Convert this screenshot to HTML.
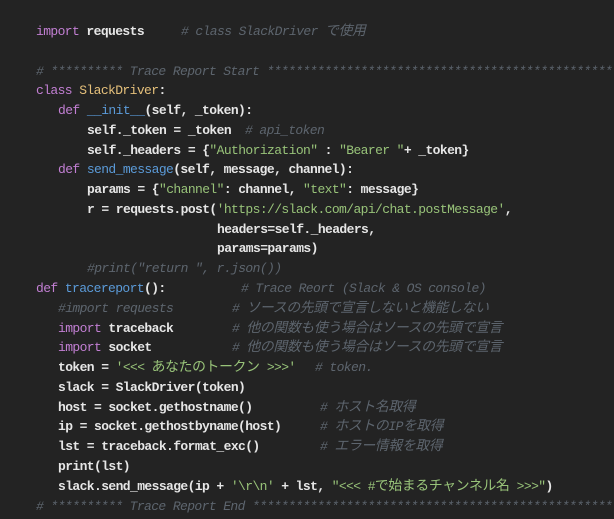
<!DOCTYPE html>
<html><head><meta charset="utf-8"><style>
html,body{margin:0;padding:0;background:#232323;width:614px;height:517px;overflow:hidden}
#w{position:absolute;left:0;top:2px;width:614px;height:517px}
.l{position:absolute;height:20px;line-height:20px;white-space:pre;font-family:"Liberation Mono","Noto Sans CJK JP",monospace;font-size:13px;letter-spacing:-0.6px;color:#e6e6e6;font-weight:bold}
.k{color:#c27fd3;font-weight:normal}
.c{color:#5d656e;font-style:italic;font-weight:normal}
.f{color:#5b9bd9;font-weight:normal}
.y{color:#e5c07b;font-weight:normal}
.s{color:#98c379;font-weight:normal}
.j{font-size:13.8px;letter-spacing:-0.3px;font-weight:normal}
</style></head><body><div id="w">
<div class="l" style="left:36px;top:20px"><span class="k">import</span> requests</div>
<div class="l c" style="left:181px;top:20px"># class SlackDriver <span class="j">で使用</span></div>
<div class="l c" style="left:36px;top:60px"># ********** Trace Report Start ***************************************************</div>
<div class="l" style="left:36px;top:79px"><span class="k">class</span> <span class="y">SlackDriver</span>:</div>
<div class="l" style="left:58px;top:99px"><span class="k">def</span> <span class="f">__init__</span>(self, _token):</div>
<div class="l" style="left:87px;top:119px">self._token = _token</div>
<div class="l c" style="left:245px;top:119px"># api_token</div>
<div class="l" style="left:87px;top:139px">self._headers = {<span class="s">"Authorization"</span> : <span class="s">"Bearer "</span>+ _token}</div>
<div class="l" style="left:58px;top:158px"><span class="k">def</span> <span class="f">send_message</span>(self, message, channel):</div>
<div class="l" style="left:87px;top:178px">params = {<span class="s">"channel"</span>: channel, <span class="s">"text"</span>: message}</div>
<div class="l" style="left:87px;top:198px">r = requests.post(<span class="s">'https://slack.com/api/chat.postMessage'</span>,</div>
<div class="l" style="left:217px;top:218px">headers=self._headers,</div>
<div class="l" style="left:217px;top:237px">params=params)</div>
<div class="l c" style="left:87px;top:257px">#print("return ", r.json())</div>
<div class="l" style="left:36px;top:277px"><span class="k">def</span> <span class="f">tracereport</span>():</div>
<div class="l c" style="left:241px;top:277px"># Trace Reort (Slack &amp; OS console)</div>
<div class="l c" style="left:58px;top:297px">#import requests</div>
<div class="l c" style="left:232px;top:297px"># <span class="j">ソースの先頭で宣言しないと機能しない</span></div>
<div class="l" style="left:58px;top:317px"><span class="k">import</span> traceback</div>
<div class="l c" style="left:232px;top:317px"># <span class="j">他の関数も使う場合はソースの先頭で宣言</span></div>
<div class="l" style="left:58px;top:336px"><span class="k">import</span> socket</div>
<div class="l c" style="left:232px;top:336px"># <span class="j">他の関数も使う場合はソースの先頭で宣言</span></div>
<div class="l" style="left:58px;top:356px">token = <span class="s">'&lt;&lt;&lt; <span class="j">あなたのトークン</span> &gt;&gt;&gt;'</span></div>
<div class="l c" style="left:315px;top:356px"># token.</div>
<div class="l" style="left:58px;top:376px">slack = SlackDriver(token)</div>
<div class="l" style="left:58px;top:396px">host = socket.gethostname()</div>
<div class="l c" style="left:320px;top:396px"># <span class="j">ホスト名取得</span></div>
<div class="l" style="left:58px;top:415px">ip = socket.gethostbyname(host)</div>
<div class="l c" style="left:320px;top:415px"># <span class="j">ホストの</span>IP<span class="j">を取得</span></div>
<div class="l" style="left:58px;top:435px">lst = traceback.format_exc()</div>
<div class="l c" style="left:320px;top:435px"># <span class="j">エラー情報を取得</span></div>
<div class="l" style="left:58px;top:455px">print(lst)</div>
<div class="l" style="left:58px;top:475px">slack.send_message(ip + <span class="s">'\r\n'</span> + lst, <span class="s">"&lt;&lt;&lt; #<span class="j">で始まるチャンネル名</span> &gt;&gt;&gt;"</span>)</div>
<div class="l c" style="left:36px;top:495px"># ********** Trace Report End *****************************************************</div>
</div></body></html>
